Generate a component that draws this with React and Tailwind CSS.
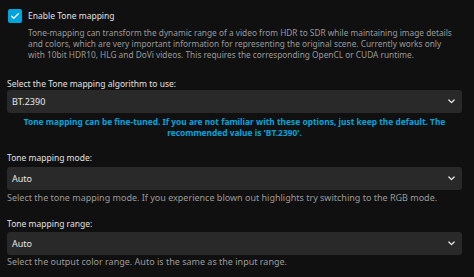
import React from 'react'

const Chevron = () => (
    <svg className="w-[9px] h-[9px]" viewBox="0 0 24 24" fill="none" stroke="#e6e6e6" strokeWidth="3.5" strokeLinecap="round" strokeLinejoin="round">
        <path d="M5 8l7 7 7-7" />
    </svg>
)

const Select = ({ value }) => (
    <div className="flex items-center justify-between h-[23px] bg-[#292929] rounded-[3px] pl-[5px] pr-[6px] text-[9px] text-[#e6e6e6]">
        <span>{value}</span>
        <Chevron />
    </div>
)

const App = () => {
    return (
        <div className="w-[474px] h-[277px] overflow-hidden bg-[#101010] pl-[7px] pr-[12px] text-[#e0e0e0]" style={{ fontFamily: '"Noto Sans", sans-serif' }}>
            <div className="flex items-center gap-[6px] pt-[9px] pl-[1px]">
                <div className="w-[14px] h-[14px] rounded-[2px] bg-[#00a4dc] flex items-center justify-center">
                    <svg className="w-[10px] h-[10px]" viewBox="0 0 24 24" fill="none" stroke="white" strokeWidth="3" strokeLinecap="round" strokeLinejoin="round">
                        <path d="M4 12.5l5 5L20 6.5" />
                    </svg>
                </div>
                <span className="text-[8.5px] leading-[14px]">Enable Tone mapping</span>
            </div>
            <p className="pl-[21px] pr-[4px] mt-[4px] text-[8.3px] leading-[11px] text-[#9a9a9a]">
                Tone-mapping can transform the dynamic range of a video from HDR to SDR while maintaining image details and colors, which are very important information for representing the original scene. Currently works only with 10bit HDR10, HLG and DoVi videos. This requires the corresponding OpenCL or CUDA runtime.
            </p>

            <div className="mt-[18px] text-[8.5px] leading-[12px]">Select the Tone mapping algorithm to use:</div>
            <Select value="BT.2390" />
            <p className="mt-[3px] px-[14px] text-center font-bold text-[8.4px] leading-[11px] text-[#00a4dc]">
                Tone mapping can be fine-tuned. If you are not familiar with these options, just keep the default. The recommended value is 'BT.2390'.
            </p>

            <div className="mt-[14px] text-[8.5px] leading-[12px]">Tone mapping mode:</div>
            <div className="mt-[3px]"><Select value="Auto" /></div>
            <p className="mt-[2px] text-[9px] leading-[12px] text-[#9a9a9a]">
                Select the tone mapping mode. If you experience blown out highlights try switching to the RGB mode.
            </p>

            <div className="mt-[14px] text-[8.5px] leading-[12px]">Tone mapping range:</div>
            <div className="mt-[2px]"><Select value="Auto" /></div>
            <p className="mt-[1px] text-[9px] leading-[12px] text-[#9a9a9a]">
                Select the output color range. Auto is the same as the input range.
            </p>
        </div>
    )
}

export default App
